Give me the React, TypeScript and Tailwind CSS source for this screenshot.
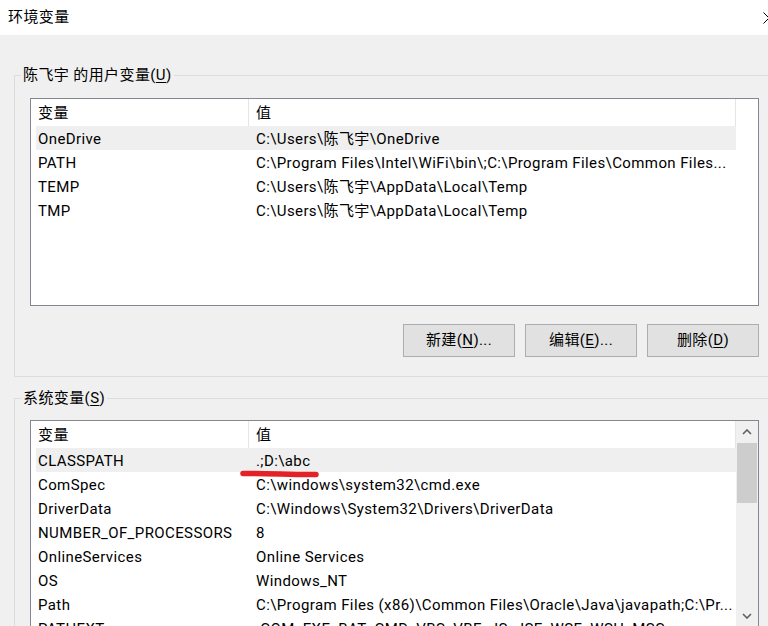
import React from "react";

type EnvVar = { name: string; value: string };

const userVars: EnvVar[] = [
    { name: "OneDrive", value: "C:\\Users\\陈飞宇\\OneDrive" },
    { name: "PATH", value: "C:\\Program Files\\Intel\\WiFi\\bin\\;C:\\Program Files\\Common Files..." },
    { name: "TEMP", value: "C:\\Users\\陈飞宇\\AppData\\Local\\Temp" },
    { name: "TMP", value: "C:\\Users\\陈飞宇\\AppData\\Local\\Temp" },
];

const systemVars: EnvVar[] = [
    { name: "CLASSPATH", value: ".;D:\\abc" },
    { name: "ComSpec", value: "C:\\windows\\system32\\cmd.exe" },
    { name: "DriverData", value: "C:\\Windows\\System32\\Drivers\\DriverData" },
    { name: "NUMBER_OF_PROCESSORS", value: "8" },
    { name: "OnlineServices", value: "Online Services" },
    { name: "OS", value: "Windows_NT" },
    { name: "Path", value: "C:\\Program Files (x86)\\Common Files\\Oracle\\Java\\javapath;C:\\Pr..." },
    { name: "PATHEXT", value: ".COM;.EXE;.BAT;.CMD;.VBS;.VBE;.JS;.JSE;.WSF;.WSH;.MSC" },
];

function Chevron({ down }: { down?: boolean }) {
    return (
        <svg width="10" height="6" viewBox="0 0 10 6">
            <polyline
                points={down ? "1,1 5,5 9,1" : "1,5 5,1 9,5"}
                fill="none"
                stroke="#606060"
                strokeWidth="1.6"
            />
        </svg>
    );
}

function VarList({ rows, scroll, mark }: { rows: EnvVar[]; scroll?: boolean; mark?: boolean }) {
    return (
        <div className="flex h-[208px] border border-[#828790] bg-white">
            <div className="flex w-[705px] flex-col overflow-hidden">
                <div className="flex h-[27px] shrink-0 items-center">
                    <div className="h-full w-[218px] border-r border-[#e5e5e5] pl-[7px] leading-[28px]">变量</div>
                    <div className="h-full flex-1 border-r border-[#e5e5e5] pl-[7px] leading-[28px]">值</div>
                </div>
                <div className="ml-[5px] flex flex-col">
                    {rows.map((row, i) => (
                        <div key={row.name} className={"grid h-6 grid-cols-[218px_1fr] leading-[26px] " + (i === 0 ? "bg-[#efefef]" : "")}>
                            <div className="whitespace-nowrap pl-[2px]">{row.name}</div>
                            <div className="relative whitespace-nowrap pl-[2px]">
                                {row.value}
                                {mark && i === 0 && (
                                    <svg className="absolute left-[-14px] top-[21px]" width="80" height="10" viewBox="0 0 80 10">
                                        <path d="M3 4.5 C 25 4, 55 6, 76 5.5" fill="none" stroke="#e52128" strokeWidth="5.5" strokeLinecap="round" />
                                    </svg>
                                )}
                            </div>
                        </div>
                    ))}
                </div>
            </div>
            {scroll ? (
                <div className="flex w-[22px] flex-col bg-[#f0f0f0]">
                    <div className="flex h-[22px] items-center justify-center"><Chevron /></div>
                    <div className="mx-[1px] h-[60px] bg-[#cdcdcd]"></div>
                    <div className="flex-1"></div>
                    <div className="flex h-[22px] items-center justify-center"><Chevron down /></div>
                </div>
            ) : (
                <div className="w-[22px]"></div>
            )}
        </div>
    );
}

function Btn({ label, hot, tail }: { label: string; hot: string; tail: string }) {
    return (
        <button className="h-[33px] w-[112px] border border-[#adadad] bg-[#e1e1e1] text-[15px]">
            {label}(<u className="underline-offset-2">{hot}</u>){tail}
        </button>
    );
}

export default function App() {
    return (
        <div className="h-[626px] w-[768px] overflow-hidden bg-[#f0f0f0] font-['Roboto','Noto_Sans_CJK_SC',sans-serif] text-[15px] tracking-[0.4px] text-black">
            <div className="flex h-[35px] items-center justify-between bg-white pl-[8px]">
                <span>环境变量</span>
                <svg className="-mr-[7px]" width="12" height="12" viewBox="0 0 12 12">
                    <path d="M0.5 0.5 L11.5 11.5 M11.5 0.5 L0.5 11.5" stroke="#000" strokeWidth="1" />
                </svg>
            </div>

            <fieldset className="ml-[14px] mt-[30px] border border-r-0 border-[#dcdcdc] pb-[19px] pl-[15px] pr-[9px] pt-[13px]">
                <legend className="-ml-[9px] px-[2px] leading-[20px]">
                    陈飞宇 的用户变量(<u className="underline-offset-2">U</u>)
                </legend>
                <VarList rows={userVars} />
                <div className="mt-[18px] flex justify-end gap-[10px]">
                    <Btn label="新建" hot="N" tail="..." />
                    <Btn label="编辑" hot="E" tail="..." />
                    <Btn label="删除" hot="D" tail="" />
                </div>
            </fieldset>

            <fieldset className="ml-[14px] mt-[11px] border border-r-0 border-[#dcdcdc] pl-[15px] pr-[9px] pt-[12px]">
                <legend className="-ml-[9px] px-[2px] leading-[20px]">
                    系统变量(<u className="underline-offset-2">S</u>)
                </legend>
                <VarList rows={systemVars} scroll mark />
            </fieldset>
        </div>
    );
}
